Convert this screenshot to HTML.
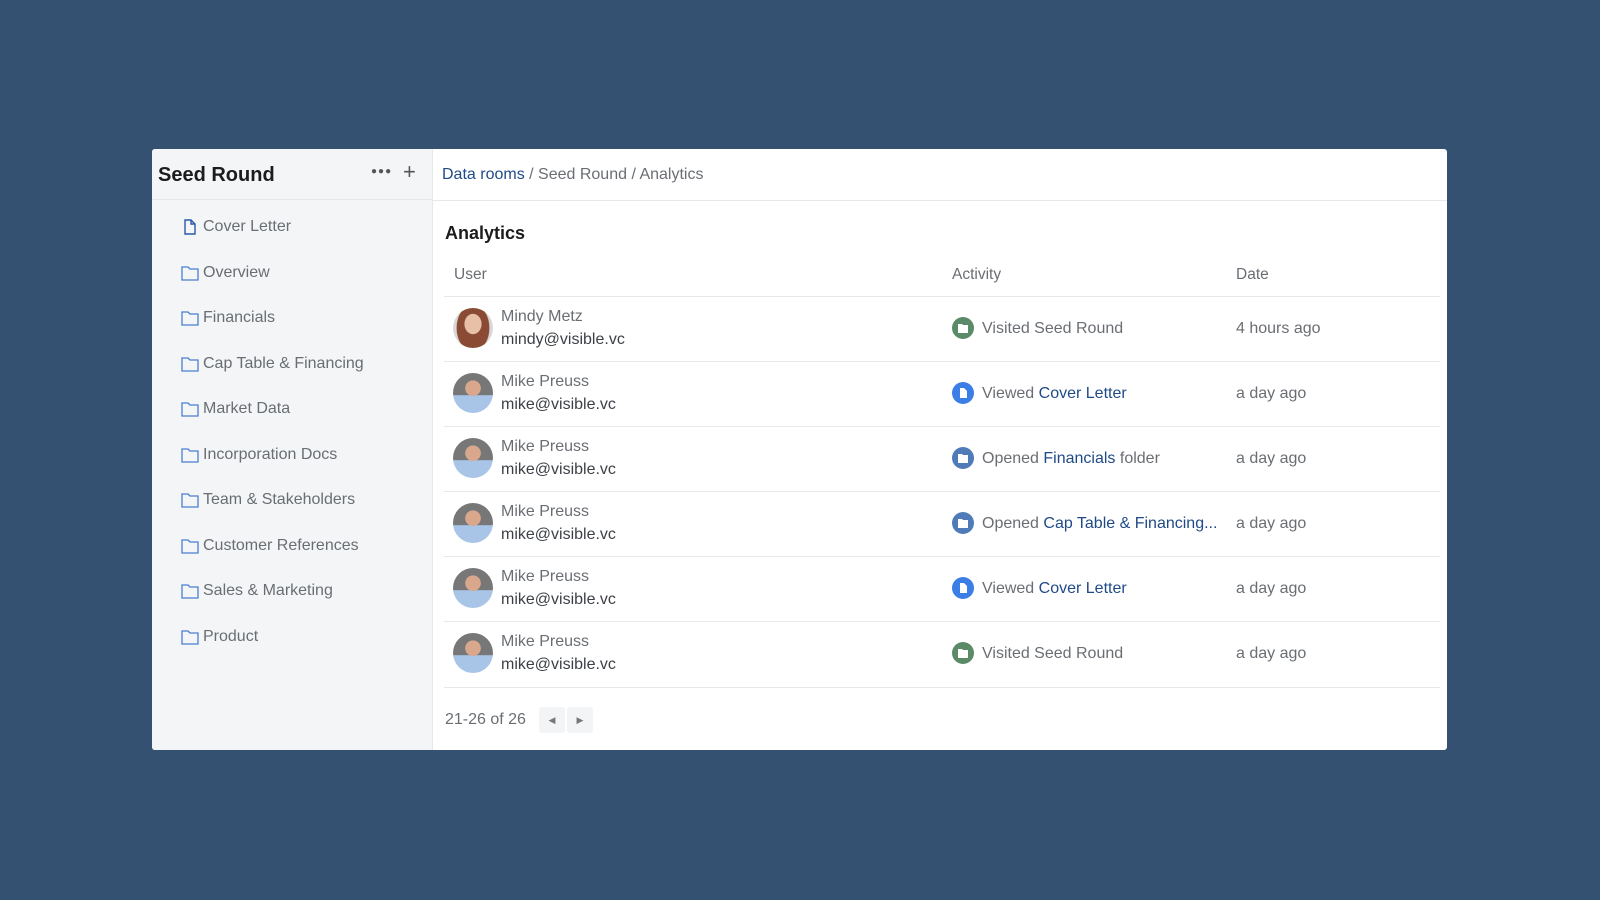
<!DOCTYPE html>
<html><head><meta charset="utf-8"><style>
*{box-sizing:border-box;margin:0;padding:0}
body{width:1600px;height:900px;background:#345172;font-family:"Liberation Sans",sans-serif;position:relative;overflow:hidden}
.card{position:absolute;left:152px;top:149px;width:1295px;height:601px;background:#fff;border-radius:3px;overflow:hidden}
.side{position:absolute;left:0;top:0;width:281px;height:100%;background:#f3f5f7;border-right:1px solid #e6e8eb}
.sh{height:51px;border-bottom:1px solid #e3e5e8;position:relative}
.sh h1{position:absolute;left:6px;top:15px;font-size:20px;font-weight:bold;color:#1c1c1c}
.dots{position:absolute;left:219px;top:17px;font-size:10px;color:#555;letter-spacing:1px}
.plus{position:absolute;left:251px;top:10px;font-size:22px;color:#555}
.item{position:absolute;left:29px;font-size:16px;color:#6a6e73;display:flex;align-items:center;gap:4px}
.item svg{width:18px;height:16px}
.bc{position:absolute;left:290px;top:17px;font-size:16px;color:#6a6e73}
.bc a{color:#1f4a87;text-decoration:none}
.topline{position:absolute;left:281px;top:51px;right:0;border-top:1px solid #e6e8eb}
.title{position:absolute;left:293px;top:74px;font-size:18px;font-weight:bold;color:#1c1c1c}
.th{position:absolute;top:117px;font-size:15.5px;color:#6a6e73}
.hl{position:absolute;left:292px;width:996px;border-top:1px solid #e6e8eb}
.row{position:absolute;left:292px;width:996px;height:65px}
.av{position:absolute;left:9px;top:12px;width:40px;height:40px;border-radius:50%;overflow:hidden}
.nm{position:absolute;left:57px;top:12px;font-size:16px;color:#6a6e73}
.em{position:absolute;left:57px;top:35px;font-size:16px;color:#3d4147}
.ic{position:absolute;left:508px;top:21px;width:22px;height:22px;border-radius:50%}
.ic svg{position:absolute;left:5px;top:5px;width:12px;height:12px}
.act{position:absolute;left:538px;top:24px;font-size:16px;color:#6a6e73;white-space:nowrap}
.act a{color:#1f4a87}
.dt{position:absolute;left:792px;top:24px;font-size:16px;color:#6a6e73}
.pg{position:absolute;left:293px;top:562px;font-size:16px;color:#6a6e73}
.btn{position:absolute;top:558px;width:26px;height:26px;background:#f3f4f5;border-radius:3px;color:#777;font-size:9px;text-align:center;line-height:26px}
</style></head><body>
<div class="card">
<div class="side">
<div class="sh"><h1>Seed Round</h1><span class="dots">●●●</span><span class="plus">+</span></div>
<div class="item" style="top:69px"><svg viewBox="0 0 18 16"><path d="M4 1h6l4 4v10H4z M10 1v4h4" fill="none" stroke="#2a5aa5" stroke-width="1.4"/></svg>Cover Letter</div>
<div class="item" style="top:115px"><svg viewBox="0 0 18 16"><path d="M1 2h6l2 2h8v11H1z" fill="none" stroke="#4a7fd0" stroke-width="1.3"/></svg>Overview</div>
<div class="item" style="top:160px"><svg viewBox="0 0 18 16"><path d="M1 2h6l2 2h8v11H1z" fill="none" stroke="#4a7fd0" stroke-width="1.3"/></svg>Financials</div>
<div class="item" style="top:206px"><svg viewBox="0 0 18 16"><path d="M1 2h6l2 2h8v11H1z" fill="none" stroke="#4a7fd0" stroke-width="1.3"/></svg>Cap Table &amp; Financing</div>
<div class="item" style="top:251px"><svg viewBox="0 0 18 16"><path d="M1 2h6l2 2h8v11H1z" fill="none" stroke="#4a7fd0" stroke-width="1.3"/></svg>Market Data</div>
<div class="item" style="top:297px"><svg viewBox="0 0 18 16"><path d="M1 2h6l2 2h8v11H1z" fill="none" stroke="#4a7fd0" stroke-width="1.3"/></svg>Incorporation Docs</div>
<div class="item" style="top:342px"><svg viewBox="0 0 18 16"><path d="M1 2h6l2 2h8v11H1z" fill="none" stroke="#4a7fd0" stroke-width="1.3"/></svg>Team &amp; Stakeholders</div>
<div class="item" style="top:388px"><svg viewBox="0 0 18 16"><path d="M1 2h6l2 2h8v11H1z" fill="none" stroke="#4a7fd0" stroke-width="1.3"/></svg>Customer References</div>
<div class="item" style="top:433px"><svg viewBox="0 0 18 16"><path d="M1 2h6l2 2h8v11H1z" fill="none" stroke="#4a7fd0" stroke-width="1.3"/></svg>Sales &amp; Marketing</div>
<div class="item" style="top:479px"><svg viewBox="0 0 18 16"><path d="M1 2h6l2 2h8v11H1z" fill="none" stroke="#4a7fd0" stroke-width="1.3"/></svg>Product</div>
</div>
<div class="bc"><a>Data rooms</a> / Seed Round / Analytics</div>
<div class="topline"></div>
<div class="title">Analytics</div>
<div class="th" style="left:302px">User</div>
<div class="th" style="left:800px">Activity</div>
<div class="th" style="left:1084px">Date</div>
<div class="hl" style="top:147px"></div>

<div class="row" style="top:147px"><div class="av" style="background:radial-gradient(ellipse 22% 26% at 50% 40%,#e8c0a8 0 95%,transparent 100%),radial-gradient(ellipse 42% 60% at 50% 50%,#8a4a34 0 95%,transparent 100%),#d8d8d8"></div><div class="nm">Mindy Metz</div><div class="em">mindy@visible.vc</div><div class="ic" style="background:#5a8a68"><svg viewBox="0 0 12 12"><path d="M1 2h4l1 1h5v8H1z" fill="#fff"/></svg></div><div class="act">Visited Seed Round</div><div class="dt">4 hours ago</div></div>
<div class="hl" style="top:212px"></div>
<div class="row" style="top:212px"><div class="av" style="background:radial-gradient(circle at 50% 38%,#d9a88c 0 24%,transparent 25%),linear-gradient(#777 0 55%,#a8c4e6 56%)"></div><div class="nm">Mike Preuss</div><div class="em">mike@visible.vc</div><div class="ic" style="background:#3b7ee6"><svg viewBox="0 0 12 12"><path d="M3 1h4l3 3v7H3z" fill="#fff"/></svg></div><div class="act">Viewed <a>Cover Letter</a></div><div class="dt">a day ago</div></div>
<div class="hl" style="top:277px"></div>
<div class="row" style="top:277px"><div class="av" style="background:radial-gradient(circle at 50% 38%,#d9a88c 0 24%,transparent 25%),linear-gradient(#777 0 55%,#a8c4e6 56%)"></div><div class="nm">Mike Preuss</div><div class="em">mike@visible.vc</div><div class="ic" style="background:#4f7cb8"><svg viewBox="0 0 12 12"><path d="M1 2h4l1 1h5v8H1z" fill="#fff"/></svg></div><div class="act">Opened <a>Financials</a> folder</div><div class="dt">a day ago</div></div>
<div class="hl" style="top:342px"></div>
<div class="row" style="top:342px"><div class="av" style="background:radial-gradient(circle at 50% 38%,#d9a88c 0 24%,transparent 25%),linear-gradient(#777 0 55%,#a8c4e6 56%)"></div><div class="nm">Mike Preuss</div><div class="em">mike@visible.vc</div><div class="ic" style="background:#4f7cb8"><svg viewBox="0 0 12 12"><path d="M1 2h4l1 1h5v8H1z" fill="#fff"/></svg></div><div class="act">Opened <a>Cap Table &amp; Financing...</a></div><div class="dt">a day ago</div></div>
<div class="hl" style="top:407px"></div>
<div class="row" style="top:407px"><div class="av" style="background:radial-gradient(circle at 50% 38%,#d9a88c 0 24%,transparent 25%),linear-gradient(#777 0 55%,#a8c4e6 56%)"></div><div class="nm">Mike Preuss</div><div class="em">mike@visible.vc</div><div class="ic" style="background:#3b7ee6"><svg viewBox="0 0 12 12"><path d="M3 1h4l3 3v7H3z" fill="#fff"/></svg></div><div class="act">Viewed <a>Cover Letter</a></div><div class="dt">a day ago</div></div>
<div class="hl" style="top:472px"></div>
<div class="row" style="top:472px"><div class="av" style="background:radial-gradient(circle at 50% 38%,#d9a88c 0 24%,transparent 25%),linear-gradient(#777 0 55%,#a8c4e6 56%)"></div><div class="nm">Mike Preuss</div><div class="em">mike@visible.vc</div><div class="ic" style="background:#5a8a68"><svg viewBox="0 0 12 12"><path d="M1 2h4l1 1h5v8H1z" fill="#fff"/></svg></div><div class="act">Visited Seed Round</div><div class="dt">a day ago</div></div>
<div class="hl" style="top:538px"></div>
<div class="pg">21-26 of 26</div>
<div class="btn" style="left:387px">◀</div>
<div class="btn" style="left:415px">▶</div>
</div>
</body></html>
